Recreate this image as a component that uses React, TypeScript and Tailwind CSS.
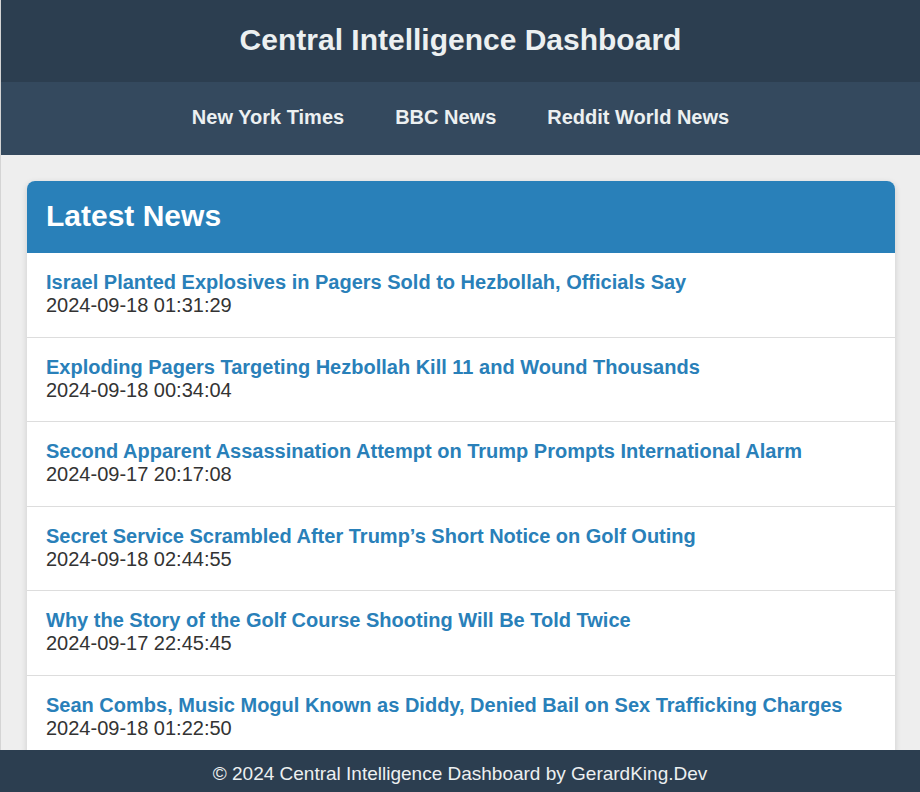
import React from "react";

const items = [
  ["Israel Planted Explosives in Pagers Sold to Hezbollah, Officials Say", "2024-09-18 01:31:29"],
  ["Exploding Pagers Targeting Hezbollah Kill 11 and Wound Thousands", "2024-09-18 00:34:04"],
  ["Second Apparent Assassination Attempt on Trump Prompts International Alarm", "2024-09-17 20:17:08"],
  ["Secret Service Scrambled After Trump\u2019s Short Notice on Golf Outing", "2024-09-18 02:44:55"],
  ["Why the Story of the Golf Course Shooting Will Be Told Twice", "2024-09-17 22:45:45"],
  ["Sean Combs, Music Mogul Known as Diddy, Denied Bail on Sex Trafficking Charges", "2024-09-18 01:22:50"],
];

export default function App() {
  return (
    <div
      className="h-[792px] overflow-hidden bg-[#eeeeee] border-l border-[#d4d4d4] text-[#333333]"
      style={{ fontFamily: '"Liberation Sans", Arial, sans-serif' }}
    >
      <header className="h-[82px] bg-[#2c3e50] flex items-center justify-center pb-[2px]">
        <h1 className="text-[30px] font-bold text-[#ecf0f1] leading-none">Central Intelligence Dashboard</h1>
      </header>
      <nav className="h-[73px] bg-[#34495e] flex items-center justify-center gap-[51px] pb-[4px]">
        <a className="text-[20px] font-bold text-[#ecf0f1]">New York Times</a>
        <a className="text-[20px] font-bold text-[#ecf0f1]">BBC News</a>
        <a className="text-[20px] font-bold text-[#ecf0f1]">Reddit World News</a>
      </nav>
      <main className="pt-[26px] pl-[26px] pr-[25px]">
        <section className="bg-white rounded-t-lg shadow-[0_2px_6px_rgba(0,0,0,0.15)] overflow-hidden">
          <div className="h-[72px] bg-[#2980b9] flex items-center px-[19px] pb-[4px]">
            <h2 className="text-[30px] font-bold text-white">Latest News</h2>
          </div>
          <ul>
            {items.map(([t, d], i) => (
              <li key={i} className="px-[19px] pt-[18px] pb-[19.5px] border-b border-[#dddddd]">
                <a className="block text-[20px] font-bold text-[#2980b9] leading-[23px]">{t}</a>
                <div className="text-[20px] leading-[23px] text-[#333333]">{d}</div>
              </li>
            ))}
          </ul>
        </section>
      </main>
      <footer className="fixed bottom-0 left-0 right-0 h-[42px] bg-[#2c3e50] flex items-center justify-center pt-[5px]">
        <p className="text-[19px] leading-[22px] text-[#ecf0f1]">© 2024 Central Intelligence Dashboard by GerardKing.Dev</p>
      </footer>
    </div>
  );
}
